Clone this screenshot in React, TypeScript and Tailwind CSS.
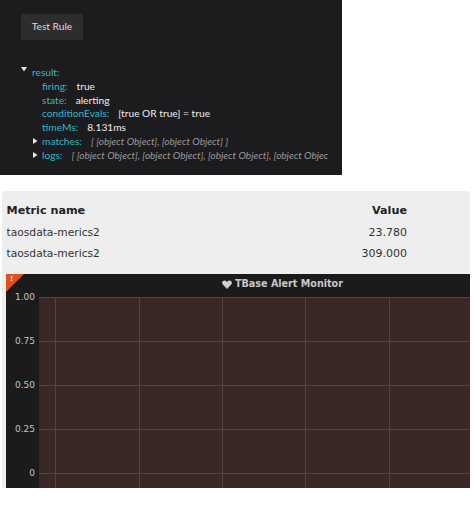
import React from 'react';

const treeFont = { fontFamily: 'Lato, sans-serif' };

const yLabels = ['1.00', '0.75', '0.50', '0.25', '0'];
const gridYs = [0.5, 44.5, 88.5, 132.5, 176.5];
const gridXs = [16.5, 100.5, 183.5, 266.5, 350.5];

function Caret({ open }: { open?: boolean }) {
  return (
    <svg width="6" height="6" viewBox="0 0 6 6" className="shrink-0">
      {open ? <path d="M0 1h6L3 5.5z" fill="#e6e6e6" /> : <path d="M1 0l4.5 3L1 6z" fill="#e6e6e6" />}
    </svg>
  );
}

function Row({ label, value }: { label: string; value: string }) {
  return (
    <div className="flex h-[13.8px] items-center pl-[42px]">
      <span className="text-[#2fb8cb]">{label}</span>
      <span className="ml-[9px] text-[#ececec]">{value}</span>
    </div>
  );
}

function Collapsed({ label, value }: { label: string; value: string }) {
  return (
    <div className="flex h-[13.8px] items-center whitespace-nowrap pl-[32px]">
      <Caret />
      <span className="ml-[4px] text-[#2fb8cb]">{label}</span>
      <span className="ml-[9px] text-[10px] italic text-[#9a9a9a]">{value}</span>
    </div>
  );
}

function TestPanel() {
  return (
    <div className="h-[175px] w-[342px] overflow-hidden bg-[#1c1c1e] pt-[14px]" style={treeFont}>
      <button className="ml-[21px] flex h-[26px] w-[62px] items-center justify-center bg-[#2d2d2f] text-[10.200px] text-[#dcdcdc]">
        Test Rule
      </button>
      <div className="pt-[25px] text-[10.200px] leading-[14px]">
        <div className="flex h-[13.8px] items-center pl-[21px]">
          <span className="-mt-[6px]">
            <Caret open />
          </span>
          <span className="ml-[5px] text-[#2fb8cb]">result:</span>
        </div>
        <Row label="firing:" value="true" />
        <Row label="state:" value="alerting" />
        <Row label="conditionEvals:" value="[true OR true] = true" />
        <Row label="timeMs:" value="8.131ms" />
        <Collapsed label="matches:" value="[ [object Object], [object Object] ]" />
        <Collapsed label="logs:" value="[ [object Object], [object Object], [object Object], [object Objec" />
      </div>
    </div>
  );
}

function AlertChart() {
  return (
    <div className="relative ml-[4px] h-[214px] w-[464px] bg-[#1c1b1c]" style={{ fontFamily: '"DejaVu Sans", sans-serif' }}>
      <div className="absolute left-0 top-0 h-0 w-0 border-r-[18px] border-t-[18px] border-r-transparent border-t-[#e0501f]" />
      <span className="absolute left-[4px] top-[1px] text-[7px] font-bold leading-[9px] text-[#f5e6de]">!</span>

      <div className="flex h-[23px] items-center gap-[3px] pb-[2px] pl-[216px] text-[9.600px] font-bold text-[#c8c8c8]">
        <svg width="10" height="9" viewBox="0 0 10 9">
          <path d="M5 9L.8 4.600C-.6 3 .2.4 2.500.4 3.600.4 4.500 1 5 2c.5-1 1.400-1.600 2.500-1.600C9.800.4 10.600 3 9.200 4.600z" fill="#d0d0d0" />
        </svg>
        <span>TBase Alert Monitor</span>
      </div>

      <div className="flex h-[191px]">
        <div className="-mt-[5.500px] w-[33px] pr-[4px] text-right text-[9px] leading-[11px] text-[#c4c4c4]">
          {yLabels.map((l) => (
            <div key={l} className="h-[44px]">
              {l}
            </div>
          ))}
        </div>
        <svg width="431" height="191" className="block bg-[#3a2827]">
          {gridYs.map((y) => (
            <line key={y} x1="0" x2="431" y1={y} y2={y} stroke="#544342" strokeWidth="1" />
          ))}
          {gridXs.map((x) => (
            <line key={x} x1={x} x2={x} y1="0" y2="191" stroke="#544342" strokeWidth="1" />
          ))}
        </svg>
      </div>
    </div>
  );
}

function MetricTable() {
  const rows = [
    ['taosdata-merics2', '23.780'],
    ['taosdata-merics2', '309.000'],
  ];
  return (
    <div className="ml-[2px] mt-[16px] h-[297px] w-[468px] bg-[#eeeeee] pt-[12px]" style={{ fontFamily: '"DejaVu Sans", sans-serif' }}>
      <div className="flex h-[17px] w-[405px] items-center justify-between pl-[4.500px] text-[11.200px] font-bold text-[#222222]">
        <span>Metric name</span>
        <span>Value</span>
      </div>
      <div className="flex flex-col gap-[4px] pt-[5px]">
        {rows.map(([name, val]) => (
          <div key={val} className="flex h-[17px] w-[405px] items-center justify-between pl-[4.500px] text-[11px] text-[#333333]">
            <span className="text-[10.700px]">{name}</span>
            <span>{val}</span>
          </div>
        ))}
      </div>
      <div className="h-[11px]" />
      <AlertChart />
    </div>
  );
}

export default function App() {
  return (
    <div className="min-h-[508px] w-[474px] overflow-hidden bg-white">
      <TestPanel />
      <MetricTable />
    </div>
  );
}
